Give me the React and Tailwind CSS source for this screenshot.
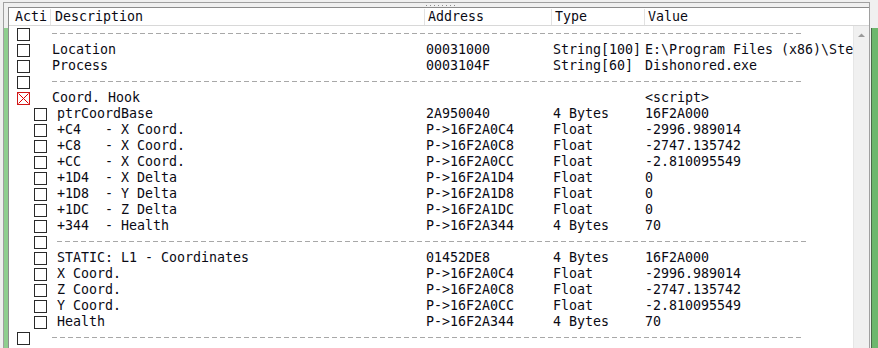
import React from "react";

const rows = [
  { sep: true, lvl: 0 },
  { lvl: 0, d: "Location", a: "00031000", t: "String[100]", v: "E:\\Program Files (x86)\\Steam\\steamapps\\common\\Dishonored" },
  { lvl: 0, d: "Process", a: "0003104F", t: "String[60]", v: "Dishonored.exe" },
  { sep: true, lvl: 0 },
  { lvl: 0, d: "Coord. Hook", a: "", t: "", v: "<script>", checked: true },
  { lvl: 1, d: "ptrCoordBase", a: "2A950040", t: "4 Bytes", v: "16F2A000" },
  { lvl: 1, d: "+C4   - X Coord.", a: "P->16F2A0C4", t: "Float", v: "-2996.989014" },
  { lvl: 1, d: "+C8   - X Coord.", a: "P->16F2A0C8", t: "Float", v: "-2747.135742" },
  { lvl: 1, d: "+CC   - X Coord.", a: "P->16F2A0CC", t: "Float", v: "-2.810095549" },
  { lvl: 1, d: "+1D4  - X Delta", a: "P->16F2A1D4", t: "Float", v: "0" },
  { lvl: 1, d: "+1D8  - Y Delta", a: "P->16F2A1D8", t: "Float", v: "0" },
  { lvl: 1, d: "+1DC  - Z Delta", a: "P->16F2A1DC", t: "Float", v: "0" },
  { lvl: 1, d: "+344  - Health", a: "P->16F2A344", t: "4 Bytes", v: "70" },
  { sep: true, lvl: 1 },
  { lvl: 1, d: "STATIC: L1 - Coordinates", a: "01452DE8", t: "4 Bytes", v: "16F2A000" },
  { lvl: 1, d: "X Coord.", a: "P->16F2A0C4", t: "Float", v: "-2996.989014" },
  { lvl: 1, d: "Z Coord.", a: "P->16F2A0C8", t: "Float", v: "-2747.135742" },
  { lvl: 1, d: "Y Coord.", a: "P->16F2A0CC", t: "Float", v: "-2.810095549" },
  { lvl: 1, d: "Health", a: "P->16F2A344", t: "4 Bytes", v: "70" },
  { sep: true, lvl: 0 },
];

const Box = ({ checked }) =>
  checked ? (
    <svg width="13" height="13" viewBox="0 0 13 13" className="shrink-0 mt-[2px]">
      <rect x="0.5" y="0.5" width="12" height="12" fill="#fff" stroke="#d01818" />
      <path d="M1.5 1.5L11.5 11.5M11.5 1.5L1.5 11.5" stroke="#e00000" strokeWidth="1" />
    </svg>
  ) : (
    <div className="w-[13px] h-[13px] mt-[2px] border border-[#2a2a2a] bg-white shrink-0" />
  );

const Row = ({ r }) => (
  <div className="flex h-4 shrink-0 min-w-0">
    <div className={r.lvl ? "w-[48px] pl-[25px] shrink-0 flex" : "w-[43px] pl-[8px] shrink-0 flex"}>
      <Box checked={r.checked} />
    </div>
    {r.sep ? (
      <div className="w-[751px] h-px mt-[7px] shrink-0 bg-[repeating-linear-gradient(90deg,#a8a8a8_0px,#a8a8a8_5px,transparent_5px,transparent_8px)]" />
    ) : (
      <>
        <div className={r.lvl ? "w-[367px] shrink-0 whitespace-pre" : "w-[372px] shrink-0 whitespace-pre"}>{r.d}</div>
        <div className="w-[127px] pl-[2px] shrink-0 whitespace-pre">{r.a}</div>
        <div className="w-[93px] pl-[2px] shrink-0 whitespace-pre">{r.t}</div>
        <div className="pl-[1px] whitespace-pre">{r.v}</div>
      </>
    )}
  </div>
);

export default function App() {
  return (
    <div className="w-[878px] h-[348px] bg-[#f0f0f0] overflow-hidden flex flex-col font-['DejaVu_Sans_Mono',monospace] text-[13.3px] leading-4 text-[#0a0a14]">
      <div className="h-[2px] shrink-0" />
      <div className="flex-1 flex min-h-0 min-w-0">
        <div className="w-[3px] shrink-0" />
        <div className="flex-1 flex flex-col border-l border-t border-r border-[#a0a0a0] min-h-0 min-w-0">
          {/* splitter grip */}
          <div className="h-[4px] shrink-0 flex items-center pl-[422px] gap-[3px]">
            {Array.from({ length: 8 }).map((_, i) => (
              <div key={i} className="w-px h-px bg-[#8a8a8a]" />
            ))}
          </div>
          <div className="flex-1 flex min-h-0 min-w-0">
            <div className="w-[4px] shrink-0 flex flex-col">
              <div className="h-[21px] shrink-0" />
              <div className="flex-1 bg-[#8fce8f]" />
            </div>
            <div className="flex-1 flex flex-col border-l border-t border-[#8c8c8c] bg-white min-h-0 min-w-0">
              {/* header */}
              <div className="h-[18px] shrink-0 flex border-b border-[#d8d8d8] bg-white pt-[1px]">
                <div className="w-[42px] pl-[6px] border-r border-[#e2e2e2] overflow-hidden whitespace-nowrap shrink-0">Acti</div>
                <div className="w-[374px] pl-[4px] border-r border-[#e2e2e2] shrink-0">Description</div>
                <div className="w-[127px] pl-[3px] border-r border-[#e2e2e2] shrink-0">Address</div>
                <div className="w-[93px] pl-[3px] border-r border-[#e2e2e2] shrink-0">Type</div>
                <div className="flex-1 pl-[3px] min-w-0">Value</div>
              </div>
              <div className="flex-1 flex min-h-0 min-w-0">
                <div className="flex-1 flex flex-col overflow-hidden min-w-0">
                  {rows.map((r, i) => (
                    <Row key={i} r={r} />
                  ))}
                </div>
                {/* scrollbar */}
                <div className="w-[16px] shrink-0 bg-[#f0f0f0] border-l border-[#e6e6e6] flex justify-center pt-[7px]">
                  <svg width="7" height="4" viewBox="0 0 7 4">
                    <path d="M0 4L3.5 0.5L7 4Z" fill="#9a9a9a" />
                  </svg>
                </div>
              </div>
            </div>
          </div>
        </div>
        {/* right frame */}
        <div className="w-[8px] shrink-0 flex">
          <div className="w-px" />
          <div className="w-px flex flex-col">
            <div className="h-[26px] shrink-0" />
            <div className="flex-1 bg-[#4a6a4a]" />
          </div>
          <div className="flex-1 flex flex-col">
            <div className="h-[26px] shrink-0" />
            <div className="flex-1 bg-[#6db76d]" />
          </div>
        </div>
      </div>
    </div>
  );
}
